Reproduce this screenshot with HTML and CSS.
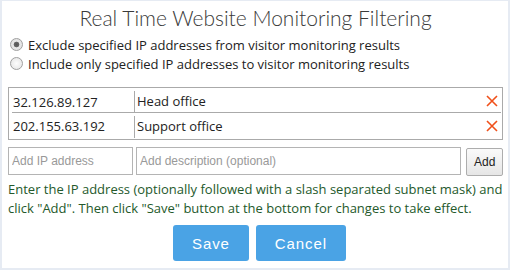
FILE: index.html
```html
<!DOCTYPE html>
<html lang="en">
<head>
  <meta charset="UTF-8">
  <title>Real Time Website Monitoring Filtering</title>
  <link rel="stylesheet" href="styles.css">
</head>
<body>
  <div class="panel">
    <h2 class="title">Real Time Website Monitoring Filtering</h2>

    <!-- Mode -->
    <div class="modes">
      <label class="mode"><input type="radio" name="mode" checked> Exclude specified IP addresses from visitor monitoring results</label>
      <label class="mode"><input type="radio" name="mode"> Include only specified IP addresses to visitor monitoring results</label>
    </div>

    <!-- IP list -->
    <div class="ip-list">
      <div class="ip-row first">
        <div class="ip">32.126.89.127</div>
        <div class="desc">Head office</div>
        <span class="remove"><svg width="12" height="12" viewBox="0 0 12 12"><path d="M1 1 L11 11 M11 1 L1 11" stroke="#f0501a" stroke-width="1.6" fill="none"/></svg></span>
      </div>
      <div class="ip-row">
        <div class="ip">202.155.63.192</div>
        <div class="desc">Support office</div>
        <span class="remove"><svg width="12" height="12" viewBox="0 0 12 12"><path d="M1 1 L11 11 M11 1 L1 11" stroke="#f0501a" stroke-width="1.6" fill="none"/></svg></span>
      </div>
    </div>

    <!-- Add form -->
    <div class="add-form">
      <input class="add-ip" type="text" placeholder="Add IP address">
      <input class="add-desc" type="text" placeholder="Add description (optional)">
      <button class="add-btn">Add</button>
    </div>

    <p class="help">Enter the IP address (optionally followed with a slash separated subnet mask) and click "Add". Then click "Save" button at the bottom for changes to take effect.</p>

    <div class="actions">
      <button class="btn">Save</button>
      <button class="btn">Cancel</button>
    </div>
  </div>
</body>
</html>
```

FILE: styles.css
```css
html, body {
  margin: 0;
  padding: 0;
  height: 100%;
  background-color: #e6ebf3;
  overflow: hidden;
  font-family: "Open Sans", "DejaVu Sans", sans-serif;
  font-size: 13px;
  color: #222;
}

.panel {
  margin: 1px 2px 0 2px;
  height: 267px;
  background: #fff;
  box-sizing: border-box;
  padding: 5px 5px 0 6px;
}

.title {
  margin: 0;
  text-align: center;
  font-family: Lato, "Open Sans", sans-serif;
  font-weight: 300;
  font-size: 21px;
  line-height: 24px;
  color: #3a3a3a;
}

.modes {
  margin-top: 5px;
}

.mode {
  display: flex;
  align-items: center;
  height: 19px;
  white-space: nowrap;
}

.mode input {
  appearance: none;
  -webkit-appearance: none;
  box-sizing: border-box;
  margin: 0 5px 0 2px;
  width: 13px;
  height: 13px;
  border: 1px solid #a0a0a0;
  border-radius: 50%;
  background: radial-gradient(circle, #fdfdfd 0%, #e2e2e2 100%);
}

.mode input:checked {
  background: radial-gradient(circle, #555 0, #666 2.5px, #e8e8e8 3.2px, #dcdcdc 100%);
}

/* IP list */
.ip-list {
  margin-top: 14px;
  border: 1px solid #aaa;
  padding: 1px 1px 1px 3px;
}

.ip-row {
  display: flex;
  align-items: stretch;
  height: 24px;
}

.ip-row.first {
  height: 23px;
  border-bottom: 1px solid #aaa;
  margin-bottom: 1px;
}

.ip {
  width: 121px;
  padding-left: 1px;
  border-right: 1px solid #aaa;
  display: flex;
  align-items: center;
  margin-top: 2px;
  padding-bottom: 2px;
}

.ip-row.first .ip {
  padding-bottom: 0;
}

.desc {
  flex: 1;
  padding-left: 2px;
  display: flex;
  align-items: center;
}

.remove {
  display: flex;
  align-items: center;
  padding-right: 3px;
}

/* Add form */
.add-form {
  display: flex;
  margin-top: 7px;
  height: 28px;
}

.add-form input {
  box-sizing: border-box;
  height: 28px;
  margin: 0;
  border: 1px solid #b4b4b4;
  padding: 0 3px;
  font-family: "Liberation Sans", Arial, sans-serif;
  font-size: 12px;
  color: #222;
}

.add-form input::placeholder {
  color: #999;
}

.add-ip {
  width: 125px;
}

.add-desc {
  width: 328px;
  margin-left: 3px !important;
}

.add-btn {
  margin: 1px 0 0 5px;
  width: 37px;
  height: 28px;
  border: 1px solid #adadad;
  border-radius: 2px;
  background: linear-gradient(#fafafa, #e6e6e6);
  font-family: "Liberation Sans", Arial, sans-serif;
  font-size: 12px;
  color: #222;
  padding: 0;
}

.help {
  margin: 5px 0 0 0;
  line-height: 19px;
  color: #24592b;
}

.actions {
  display: flex;
  justify-content: center;
  gap: 7px;
  margin-top: 7px;
  padding-left: 8px;
}

.btn {
  height: 36px;
  padding: 0 19px;
  border: none;
  border-radius: 3px;
  background: #4aa3e5;
  color: #fff;
  font-family: "Liberation Sans", Arial, sans-serif;
  font-size: 15px;
  letter-spacing: 0.9px;
}
```
